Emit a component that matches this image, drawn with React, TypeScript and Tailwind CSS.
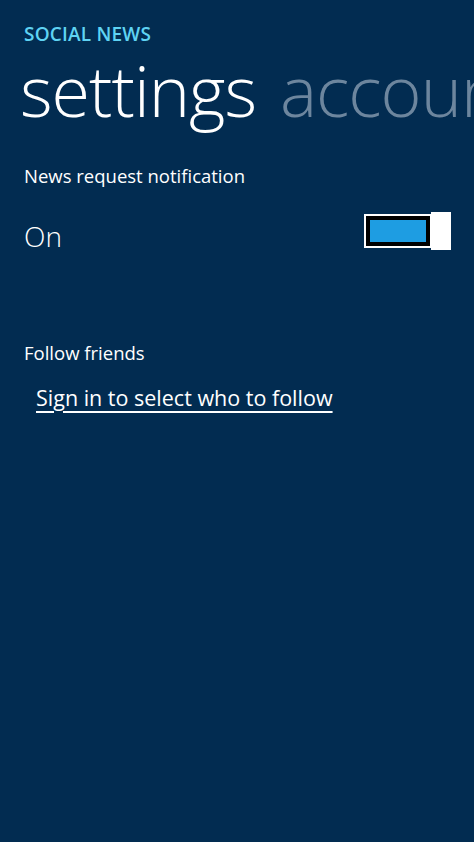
import { useState } from "react";

const Toggle = ({ on, onChange }: { on: boolean; onChange: () => void }) => {
  return (
    <button onClick={onChange} className="flex items-center mb-[10px]">
      <div className="w-[68px] h-[34px] border-2 border-white bg-black p-[4px]">
        <div className={on ? "w-full h-full bg-[#1e9de2]" : "w-full h-full bg-transparent"} />
      </div>
      <div className="w-[20px] h-[38px] bg-white -ml-[1px]" />
    </button>
  );
};

const App = () => {
  const [notify, setNotify] = useState(true);
  return (
    <div
      className="w-[474px] h-[842px] bg-[#022c51] text-white overflow-hidden"
      style={{ fontFamily: '"Open Sans", "Noto Sans", sans-serif' }}
    >
      <div className="pl-6 pt-[24px]">
        <div className="text-[19px] leading-[20px] font-semibold text-[#5fd3f3] tracking-[0.2px]">SOCIAL NEWS</div>
      </div>
      <div className="flex gap-6 pl-[20px] mt-[6px] whitespace-nowrap text-[70px] font-light leading-[80px] tracking-[-1px]">
        <span>settings</span>
        <span className="text-[#6d869e]">accounts</span>
      </div>
      <div className="pl-6 pr-[23px] mt-[32px]">
        <div className="text-[18.5px]">News request notification</div>
        <div className="flex justify-between items-center mt-[22px]">
          <span className="text-[28px] font-light">{notify ? "On" : "Off"}</span>
          <Toggle on={notify} onChange={() => setNotify(!notify)} />
        </div>
        <div className="text-[18.5px] mt-[79px]">Follow friends</div>
        <a href="#" className="block ml-3 mt-[15px] text-[21.5px] underline underline-offset-[5px] decoration-[1.5px]">
          Sign in to select who to follow
        </a>
      </div>
    </div>
  );
};

export default App;
